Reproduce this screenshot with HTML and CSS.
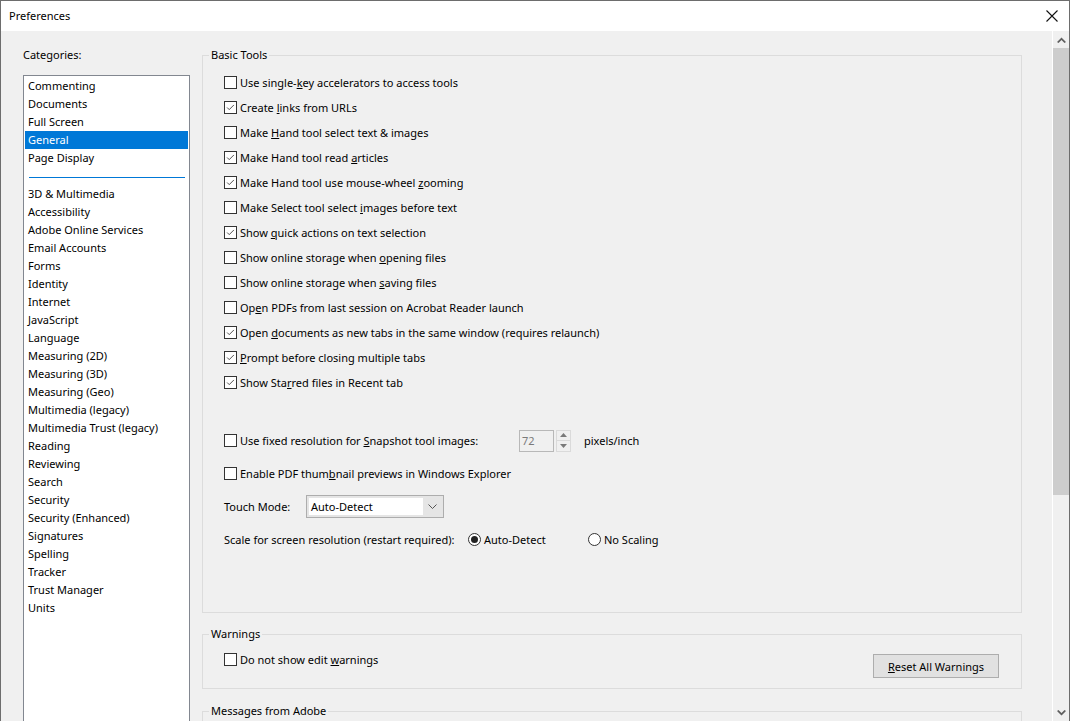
FILE: index.html
```html
<!DOCTYPE html>
<html lang="en">
<head>
<meta charset="utf-8">
<title>Preferences</title>
<link rel="stylesheet" href="styles.css">
</head>
<body>
<div class="window">
  <div class="titlebar">
    <span class="title">Preferences</span>
    <span class="close">
      <svg width="12" height="12" viewBox="0 0 12 12"><path d="M0.5 0.5 L11.5 11.5 M11.5 0.5 L0.5 11.5" stroke="#111" stroke-width="1.1" fill="none"/></svg>
    </span>
  </div>
  <div class="main">
    <div class="sidebar">
      <div class="cat-label">Categories:</div>
      <ul class="catlist">
        <li>Commenting</li>
        <li>Documents</li>
        <li>Full Screen</li>
        <li class="selected">General</li>
        <li>Page Display</li>
        <li class="sep"><span></span></li>
        <li>3D &amp; Multimedia</li>
        <li>Accessibility</li>
        <li>Adobe Online Services</li>
        <li>Email Accounts</li>
        <li>Forms</li>
        <li>Identity</li>
        <li>Internet</li>
        <li>JavaScript</li>
        <li>Language</li>
        <li>Measuring (2D)</li>
        <li>Measuring (3D)</li>
        <li>Measuring (Geo)</li>
        <li>Multimedia (legacy)</li>
        <li>Multimedia Trust (legacy)</li>
        <li>Reading</li>
        <li>Reviewing</li>
        <li>Search</li>
        <li>Security</li>
        <li>Security (Enhanced)</li>
        <li>Signatures</li>
        <li>Spelling</li>
        <li>Tracker</li>
        <li>Trust Manager</li>
        <li>Units</li>
      </ul>
    </div>
    <div class="pane">
      <fieldset class="group basic">
        <legend>Basic Tools</legend>
        <div class="row"><span class="cb"></span><span>Use single-<u>k</u>ey accelerators to access tools</span></div>
        <div class="row"><span class="cb checked"><svg viewBox="0 0 13 13"><path d="M2.5 6.5 L5 9 L10.5 3.5" stroke="#333" stroke-width="1" fill="none"/></svg></span><span>Create <u>l</u>inks from URLs</span></div>
        <div class="row"><span class="cb"></span><span>Make <u>H</u>and tool select text &amp; images</span></div>
        <div class="row"><span class="cb checked"><svg viewBox="0 0 13 13"><path d="M2.5 6.5 L5 9 L10.5 3.5" stroke="#333" stroke-width="1" fill="none"/></svg></span><span>Make Hand tool read <u>a</u>rticles</span></div>
        <div class="row"><span class="cb checked"><svg viewBox="0 0 13 13"><path d="M2.5 6.5 L5 9 L10.5 3.5" stroke="#333" stroke-width="1" fill="none"/></svg></span><span>Make Hand tool use mouse-wheel <u>z</u>ooming</span></div>
        <div class="row"><span class="cb"></span><span>Make Select tool select <u>i</u>mages before text</span></div>
        <div class="row"><span class="cb checked"><svg viewBox="0 0 13 13"><path d="M2.5 6.5 L5 9 L10.5 3.5" stroke="#333" stroke-width="1" fill="none"/></svg></span><span>Show <u>q</u>uick actions on text selection</span></div>
        <div class="row"><span class="cb"></span><span>Show online storage when <u>o</u>pening files</span></div>
        <div class="row"><span class="cb"></span><span>Show online storage when <u>s</u>aving files</span></div>
        <div class="row"><span class="cb"></span><span>Op<u>e</u>n PDFs from last session on Acrobat Reader launch</span></div>
        <div class="row"><span class="cb checked"><svg viewBox="0 0 13 13"><path d="M2.5 6.5 L5 9 L10.5 3.5" stroke="#333" stroke-width="1" fill="none"/></svg></span><span>Open <u>d</u>ocuments as new tabs in the same window (requires relaunch)</span></div>
        <div class="row"><span class="cb checked"><svg viewBox="0 0 13 13"><path d="M2.5 6.5 L5 9 L10.5 3.5" stroke="#333" stroke-width="1" fill="none"/></svg></span><span><u>P</u>rompt before closing multiple tabs</span></div>
        <div class="row"><span class="cb checked"><svg viewBox="0 0 13 13"><path d="M2.5 6.5 L5 9 L10.5 3.5" stroke="#333" stroke-width="1" fill="none"/></svg></span><span>Show Sta<u>r</u>red files in Recent tab</span></div>

        <div class="row tall first-tall">
          <span class="cb"></span><span class="snap-label">Use fixed resolution for <u>S</u>napshot tool images:</span>
          <span class="spinner">
            <span class="spin-input">72</span>
            <span class="spin-btns">
              <span class="spin-btn"><svg width="7" height="4" viewBox="0 0 7 4"><path d="M0 4 L3.5 0 L7 4 Z" fill="#7a7a7a"/></svg></span>
              <span class="spin-btn"><svg width="7" height="4" viewBox="0 0 7 4"><path d="M0 0 L3.5 4 L7 0 Z" fill="#7a7a7a"/></svg></span>
            </span>
          </span>
          <span class="units">pixels/inch</span>
        </div>
        <div class="row tall"><span class="cb"></span><span>Enable PDF thum<u>b</u>nail previews in Windows Explorer</span></div>
        <div class="row tall">
          <span class="touch-label">Touch Mode:</span>
          <span class="select">
            <span class="select-field">Auto-Detect</span>
            <span class="select-arrow"><svg width="9" height="5" viewBox="0 0 9 5"><path d="M0.5 0.5 L4.5 4.5 L8.5 0.5" stroke="#555" stroke-width="1" fill="none"/></svg></span>
          </span>
        </div>
        <div class="row tall">
          <span class="scale-label">Scale for screen resolution (restart required):</span>
          <span class="radio on"><span class="dot"></span></span><span class="radio-text">Auto-Detect</span>
          <span class="radio second"></span><span class="radio-text">No Scaling</span>
        </div>
      </fieldset>

      <fieldset class="group warnings">
        <legend>Warnings</legend>
        <div class="warn-body">
          <div class="row"><span class="cb"></span><span>Do not show edit <u>w</u>arnings</span></div>
          <span class="button"><u>R</u>eset All Warnings</span>
        </div>
      </fieldset>

      <fieldset class="group messages">
        <legend>Messages from Adobe</legend>
        <div class="msg-body"></div>
      </fieldset>
    </div>
    <div class="scrollbar">
      <span class="sb-arrow"><svg width="9" height="6" viewBox="0 0 9 6"><path d="M0 5 L4.5 0.5 L9 5 L7.5 6 L4.5 3 L1.5 6 Z" fill="#606060"/></svg></span>
      <span class="sb-track"><span class="sb-thumb"></span></span>
      <span class="sb-arrow"><svg width="9" height="6" viewBox="0 0 9 6"><path d="M0 1 L4.5 5.5 L9 1 L7.5 0 L4.5 3 L1.5 0 Z" fill="#606060"/></svg></span>
    </div>
  </div>
</div>
</body>
</html>
```

FILE: styles.css
```css
* { box-sizing: border-box; }

html, body {
  margin: 0;
  padding: 0;
  overflow: hidden;
  background: #f0f0f0;
}

body {
  font-family: "Noto Sans", "Open Sans", sans-serif;
  font-size: 11px;
  color: #000;
}

.window {
  width: 1070px;
  height: 730px;
  border: 1px solid #6d6d6d;
  background: #f0f0f0;
  display: flex;
  flex-direction: column;
  overflow: hidden;
}

.titlebar {
  height: 30px;
  flex: none;
  background: #fff;
  display: flex;
  align-items: center;
  justify-content: space-between;
  padding: 0 10px 0 8px;
}

.title {
  font-size: 11px;
  line-height: 16px;
}

.close {
  display: flex;
  width: 12px;
  height: 12px;
  margin-right: 1px;
}

.main {
  flex: 1;
  display: flex;
  min-height: 0;
}

/* Sidebar */
.sidebar {
  width: 194px;
  flex: none;
  padding: 16px 5px 0 22px;
}

.cat-label {
  line-height: 16px;
  height: 16px;
}

.catlist {
  list-style: none;
  margin: 12px 0 0 0;
  padding: 1px;
  width: 167px;
  height: 700px;
  background: #fff;
  border: 1px solid #828790;
}

.catlist li {
  height: 18px;
  line-height: 18px;
  padding-left: 3px;
  white-space: nowrap;
}

.catlist li.selected {
  background: #0078d7;
  color: #fff;
}

.catlist li.sep {
  display: flex;
  align-items: center;
  padding: 0 3px 0 4px;
}

.catlist li.sep span {
  display: block;
  height: 1px;
  width: 100%;
  background: #0078d7;
  margin-top: 2px;
}

/* Right pane */
.pane {
  width: 857px;
  flex: none;
  padding: 16px 30px 0 7px;
  overflow: hidden;
}

.group {
  margin: 0;
  padding: 0 0 0 21px;
  border: 1px solid #dcdcdc;
  min-width: 0;
}

.group legend {
  padding: 0 2px;
  margin-left: -15px;
  line-height: 16px;
}

.basic {
  padding-top: 7px;
  padding-bottom: 56px;
}

.row {
  height: 25px;
  display: flex;
  align-items: center;
  white-space: nowrap;
}

.row.tall { height: 33px; }
.row.first-tall { margin-top: 29px; }

u { text-decoration: underline; text-underline-offset: 1px; }

.cb {
  width: 13px;
  height: 13px;
  border: 1px solid #333;
  background: #fff;
  flex: none;
  margin-right: 3px;
  display: flex;
}

.cb svg {
  width: 11px;
  height: 11px;
}

.snap-label { width: 279px; }

.spinner {
  display: flex;
  align-items: center;
  gap: 2px;
}

.spin-input {
  width: 35px;
  height: 22px;
  border: 1px solid #b8b8b8;
  background: #f0f0f0;
  color: #7a7a7a;
  padding-left: 2px;
  line-height: 20px;
}

.spin-btns {
  display: flex;
  flex-direction: column;
  height: 22px;
  width: 15px;
  border: 1px solid #dadada;
}

.spin-btn {
  flex: 1;
  display: flex;
  align-items: center;
  justify-content: center;
}

.spin-btn + .spin-btn { border-top: 1px solid #dadada; }

.units { margin-left: 13px; }

.touch-label { width: 82px; }

.select {
  display: flex;
  width: 138px;
  height: 23px;
  border: 1px solid #adadad;
  background: #e5e5e5;
  padding: 2px;
}

.select-field {
  flex: 1;
  background: #fff;
  padding-left: 2px;
  line-height: 17px;
}

.select-arrow {
  width: 18px;
  display: flex;
  align-items: center;
  justify-content: center;
}

.scale-label { width: 244px; }

.radio {
  width: 13px;
  height: 13px;
  border: 1px solid #333;
  border-radius: 50%;
  background: #fff;
  display: flex;
  align-items: center;
  justify-content: center;
  flex: none;
  margin-right: 3px;
}

.radio .dot {
  width: 7px;
  height: 7px;
  border-radius: 50%;
  background: #222;
}

.radio-text { width: 104px; }

.warnings {
  margin-top: 13px;
  padding-right: 22px;
  padding-bottom: 10px;
}

.warn-body {
  display: flex;
  justify-content: space-between;
  align-items: flex-start;
}

.warn-body .row { margin-top: 5px; }

.button {
  margin-top: 12px;
  width: 126px;
  height: 24px;
  border: 1px solid #adadad;
  background: #e1e1e1;
  display: flex;
  align-items: center;
  justify-content: center;
}

.messages {
  margin-top: 14px;
}

.msg-body { height: 40px; }

/* Scrollbar */
.scrollbar {
  width: 17px;
  flex: none;
  display: flex;
  flex-direction: column;
  background: #f0f0f0;
  border-left: 1px solid #fff;
  height: 690px;
}

.sb-arrow {
  height: 17px;
  flex: none;
  display: flex;
  align-items: center;
  justify-content: center;
}

.sb-track {
  flex: 1;
  display: flex;
  flex-direction: column;
}

.sb-thumb {
  height: 447px;
  background: #cdcdcd;
}
```
